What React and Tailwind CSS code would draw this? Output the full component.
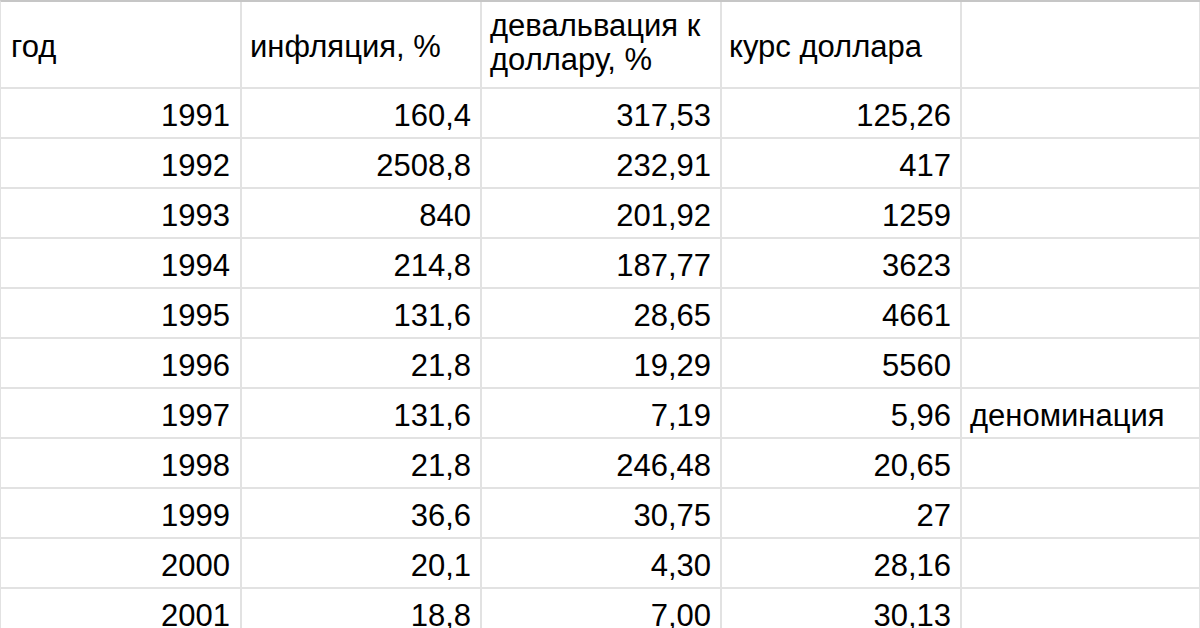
export default function App() {
  const rows = [
    ["1991", "160,4", "317,53", "125,26", ""],
    ["1992", "2508,8", "232,91", "417", ""],
    ["1993", "840", "201,92", "1259", ""],
    ["1994", "214,8", "187,77", "3623", ""],
    ["1995", "131,6", "28,65", "4661", ""],
    ["1996", "21,8", "19,29", "5560", ""],
    ["1997", "131,6", "7,19", "5,96", "деноминация"],
    ["1998", "21,8", "246,48", "20,65", ""],
    ["1999", "36,6", "30,75", "27", ""],
    ["2000", "20,1", "4,30", "28,16", ""],
    ["2001", "18,8", "7,00", "30,13", ""],
  ];
  const cols = "grid grid-cols-[241px_240px_240px_240px_239px]";
  const cell = "border-r-2 border-b-2 border-[#e2e2e2] h-[50px] pt-[10px] leading-[33px] whitespace-nowrap";
  return (
    <div className="w-[1200px] h-[628px] overflow-hidden bg-white text-black text-[31px] font-['Liberation_Sans',Arial,sans-serif]">
      <div className="border-t-2 border-l border-[#c6c6c6] border-l-[#e2e2e2]">
        <div className={cols}>
          <div className="border-r-2 border-b-2 border-[#e2e2e2] h-[87px] pl-[10px] pt-[28px] leading-[33px]">год</div>
          <div className="border-r-2 border-b-2 border-[#e2e2e2] h-[87px] pl-[8px] pt-[28px] leading-[33px]">инфляция, %</div>
          <div className="border-r-2 border-b-2 border-[#e2e2e2] h-[87px] pl-[8px] pt-[7px] leading-[34px]">девальвация к<br />доллару, %</div>
          <div className="border-r-2 border-b-2 border-[#e2e2e2] h-[87px] pl-[7px] pt-[28px] leading-[33px]">курс доллара</div>
          <div className="border-r-2 border-b-2 border-[#e2e2e2] h-[87px]"></div>
        </div>
        {rows.map((r, i) => (
          <div key={i} className={cols}>
            <div className={cell + " text-right pr-[10px]"}>{r[0]}</div>
            <div className={cell + " text-right pr-[9px]"}>{r[1]}</div>
            <div className={cell + " text-right pr-[9px]"}>{r[2]}</div>
            <div className={cell + " text-right pr-[9px]"}>{r[3]}</div>
            <div className={cell + " text-left pl-[8px]"}>{r[4]}</div>
          </div>
        ))}
      </div>
    </div>
  );
}
